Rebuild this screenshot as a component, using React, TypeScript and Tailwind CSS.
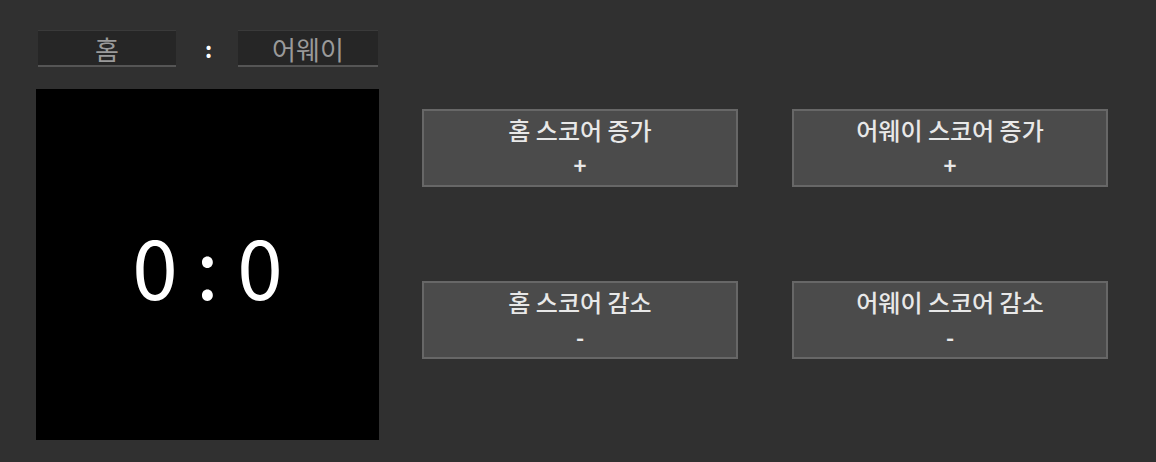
const font = { fontFamily: '"Noto Sans CJK KR", "Noto Sans", sans-serif' };

function ScoreButton({ label, sign }: { label: string; sign: string }) {
  return (
    <button className="w-[316px] h-[78px] bg-[#4b4b4b] border-2 border-[#676767] flex flex-col items-center justify-center text-[#e8e8e8] text-[24px] font-medium">
      <span className="leading-[35px] -mt-[3px]">{label}</span>
      <span className="font-bold text-[22px] leading-[35px]">{sign}</span>
    </button>
  );
}

export default function App() {
  return (
    <div className="w-full h-[462px] bg-[#303030] pl-[36px] pt-[30px] overflow-hidden" style={font}>
      <div className="flex items-center">
        <div className="ml-[2px] w-[138px] h-[37px] bg-[#262626] border-t border-[#3a3a3a] border-b-2 border-b-[#555] flex items-center justify-center text-[#9a9a9a] text-[26px]">
          홈
        </div>
        <span className="w-[62px] text-center text-white text-[22px] font-bold pl-[3px]">:</span>
        <div className="w-[140px] h-[37px] bg-[#262626] border-t border-[#3a3a3a] border-b-2 border-b-[#555] flex items-center justify-center text-[#9a9a9a] text-[26px]">
          어웨이
        </div>
      </div>

      <div className="flex mt-[22px]">
        <div className="w-[343px] h-[351px] bg-black flex items-center justify-center text-white text-[82px]">
          0 : 0
        </div>
        <div className="ml-[43px] mt-[20px] grid grid-cols-[316px_316px] gap-x-[54px] gap-y-[94px] h-fit">
          <ScoreButton label="홈 스코어 증가" sign="+" />
          <ScoreButton label="어웨이 스코어 증가" sign="+" />
          <ScoreButton label="홈 스코어 감소" sign="-" />
          <ScoreButton label="어웨이 스코어 감소" sign="-" />
        </div>
      </div>
    </div>
  );
}
